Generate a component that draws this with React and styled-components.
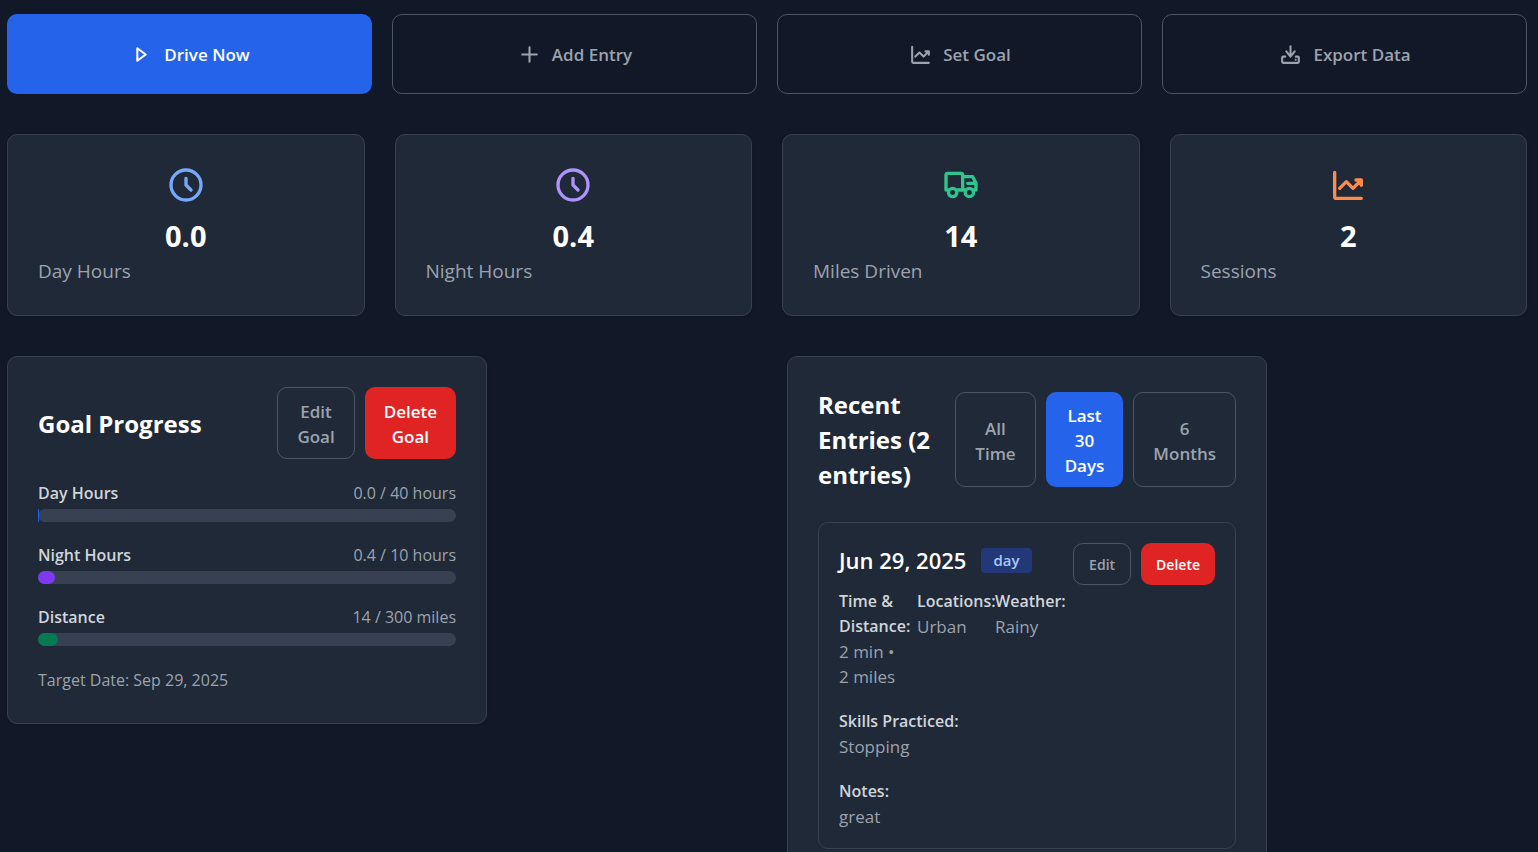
import React from "react";
import styled, { createGlobalStyle, css } from "styled-components";

const GlobalStyle = createGlobalStyle`
  *, *::before, *::after { box-sizing: border-box; }
  body {
    margin: 0;
    background: #111827;
    color: #9ca3af;
    font-family: "Segoe UI", "Open Sans", "Noto Sans", sans-serif;
    font-size: 16px;
    line-height: 25px;
  }
  h2, h3, p, dl, dt, dd, ul { margin: 0; padding: 0; }
  ul { list-style: none; }
`;

const Page = styled.main`
  display: flex;
  flex-direction: column;
  gap: 40px;
  padding: 14px 11px 40px 7px;
`;

const Actions = styled.nav`
  display: grid;
  grid-template-columns: repeat(4, 1fr);
  gap: 20px;
`;

const Stats = styled.section`
  display: grid;
  grid-template-columns: repeat(4, 1fr);
  gap: 30px;
`;

const Panels = styled.div`
  display: grid;
  grid-template-columns: repeat(2, 1fr);
  gap: 40px;
  align-items: start;
`;

const tones = {
  primary: css`
    background: #2563eb;
    color: #ffffff;
  `,
  danger: css`
    background: #e02424;
    color: #ffffff;
  `,
  outline: css`
    background: transparent;
    border: 1px solid #4b5563;
    color: #9ca3af;
  `,
};

const Button = styled.button`
  border: 0;
  border-radius: 10px;
  padding: 10px 20px;
  font: inherit;
  font-size: 17px;
  font-weight: 600;
  cursor: pointer;
  ${({ $tone }) => tones[$tone]}
`;

const ActionButton = styled(Button)`
  display: flex;
  align-items: center;
  justify-content: center;
  gap: 10px;
  height: 80px;
`;

const StackedButton = styled(Button)`
  width: min-content;
  padding: 11px 19px 9px;
`;

const SmallButton = styled(Button)`
  padding: 8px 15px;
  height: 42px;
  font-size: 14px;
`;

const Svg = styled.svg`
  display: block;
  flex: none;
  width: ${({ $size }) => $size}px;
  height: ${({ $size }) => $size}px;
`;

const Card = styled.section`
  background: #1f2937;
  border: 1px solid #374151;
  border-radius: 10px;
  padding: 30px;
  box-shadow: 0 1px 3px rgba(0, 0, 0, 0.1);
`;

const StatCard = styled(Card)`
  display: flex;
  flex-direction: column;
`;

const StatIcon = styled.div`
  align-self: center;
  margin-bottom: 10px;
  color: ${({ $color }) => $color};
`;

const StatValue = styled.p`
  color: #ffffff;
  font-size: 29px;
  font-weight: 700;
  line-height: 42px;
  text-align: center;
`;

const StatLabel = styled.p`
  font-size: 19px;
  line-height: 28px;
`;

const Panel = styled(Card)`
  width: 100%;
  max-width: 480px;
`;

const PanelHeader = styled.header`
  display: flex;
  align-items: center;
  gap: 20px;
  margin-bottom: ${({ $space }) => $space}px;
`;

const PanelTitle = styled.h2`
  flex: 1;
  color: #ffffff;
  font-size: 24px;
  font-weight: 700;
  line-height: 35px;
`;

const ButtonGroup = styled.div`
  display: flex;
  gap: 10px;
`;

const GoalList = styled.ul`
  display: grid;
  gap: 21px;
  margin-bottom: 22px;
`;

const GoalRow = styled.div`
  display: flex;
  justify-content: space-between;
  margin-bottom: 3px;
`;

const Label = styled.span`
  color: #d1d5db;
  font-weight: 600;
`;

const Track = styled.div`
  height: 13px;
  border-radius: 7px;
  background: #374151;
`;

const Fill = styled.div`
  height: 100%;
  min-width: 1px;
  border-radius: inherit;
  background: ${({ $color }) => $color};
`;

const Entry = styled.article`
  display: flex;
  align-items: flex-start;
  border: 1px solid #374151;
  border-radius: 10px;
  padding: 20px 20px 19px;
`;

const EntryBody = styled.div`
  flex: 1;
  min-width: 0;
`;

const EntryHeading = styled.div`
  display: flex;
  align-items: center;
  gap: 15px;
  margin-bottom: 11px;
`;

const EntryDate = styled.h3`
  color: #ffffff;
  font-size: 22px;
  font-weight: 600;
  line-height: 35px;
  white-space: nowrap;
`;

const Badge = styled.span`
  border-radius: 4px;
  padding: 0 12px;
  background: #233876;
  color: #a4cafe;
  font-size: 15px;
  font-weight: 600;
`;

const Details = styled.dl`
  display: grid;
  grid-template-columns: repeat(3, minmax(0, 1fr));
`;

const Detail = styled.div`
  margin-bottom: ${({ $last }) => ($last ? 0 : 20)}px;
`;

const Term = styled.dt`
  color: #d1d5db;
  font-weight: 600;
`;

const Description = styled.dd`
  font-size: 17px;
`;

const NoWrap = styled.span`
  white-space: nowrap;
`;

const paths = {
  play: "M8 18V6l8 6-8 6Z",
  plus: "M5 12h14m-7 7V5",
  chart:
    "M4 4.5V19a1 1 0 0 0 1 1h15M7 14l4-4 4 4 5-5m0 0h-3.207M20 9v3.207",
  download:
    "M12 13V4M7 14H5a1 1 0 0 0-1 1v4a1 1 0 0 0 1 1h14a1 1 0 0 0 1-1v-4a1 1 0 0 0-1-1h-2m-1-5-4 5-4-5m9 8h.01",
  clock: "M12 8v4l3 3m6-3a9 9 0 1 1-18 0 9 9 0 0 1 18 0Z",
  truck:
    "M13 7h6l2 4m-8-4v8m0-8V6a1 1 0 0 0-1-1H4a1 1 0 0 0-1 1v9h2m8 0H9m4 0h2m4 0h2v-4m0 0h-5m3.5 5.5a2.5 2.5 0 1 1-5 0 2.5 2.5 0 0 1 5 0Zm-10 0a2.5 2.5 0 1 1-5 0 2.5 2.5 0 0 1 5 0Z",
};

function Icon({ name, size }) {
  return (
    <Svg
      $size={size}
      viewBox="0 0 24 24"
      fill="none"
      stroke="currentColor"
      strokeWidth="2"
      strokeLinecap="round"
      strokeLinejoin="round"
      aria-hidden="true"
    >
      <path d={paths[name]} />
    </Svg>
  );
}

const actions = [
  { text: "Drive Now", icon: "play", tone: "primary" },
  { text: "Add Entry", icon: "plus", tone: "outline" },
  { text: "Set Goal", icon: "chart", tone: "outline" },
  { text: "Export Data", icon: "download", tone: "outline" },
];

const stats = [
  { label: "Day Hours", value: "0.0", icon: "clock", color: "#76a9fa" },
  { label: "Night Hours", value: "0.4", icon: "clock", color: "#ac94fa" },
  { label: "Miles Driven", value: "14", icon: "truck", color: "#31c48d" },
  { label: "Sessions", value: "2", icon: "chart", color: "#ff8a4c" },
];

const goals = [
  { label: "Day Hours", text: "0.0 / 40 hours", percent: 0.1, color: "#1c64f2" },
  { label: "Night Hours", text: "0.4 / 10 hours", percent: 4, color: "#7e3af2" },
  { label: "Distance", text: "14 / 300 miles", percent: 4.7, color: "#057a55" },
];

export default function App() {
  return (
    <>
      <GlobalStyle />
      <Page>
        <Actions>
          {actions.map((a) => (
            <ActionButton key={a.text} type="button" $tone={a.tone}>
              <Icon name={a.icon} size={25} />
              {a.text}
            </ActionButton>
          ))}
        </Actions>

        <Stats>
          {stats.map((s) => (
            <StatCard key={s.label} as="div">
              <StatIcon $color={s.color}>
                <Icon name={s.icon} size={40} />
              </StatIcon>
              <StatValue>{s.value}</StatValue>
              <StatLabel>{s.label}</StatLabel>
            </StatCard>
          ))}
        </Stats>

        <Panels>
          <Panel>
            <PanelHeader $space={22}>
              <PanelTitle>Goal Progress</PanelTitle>
              <ButtonGroup>
                <StackedButton type="button" $tone="outline">Edit Goal</StackedButton>
                <StackedButton type="button" $tone="danger">Delete Goal</StackedButton>
              </ButtonGroup>
            </PanelHeader>
            <GoalList>
              {goals.map((g) => (
                <li key={g.label}>
                  <GoalRow>
                    <Label>{g.label}</Label>
                    <span>{g.text}</span>
                  </GoalRow>
                  <Track>
                    <Fill $color={g.color} style={{ width: `${g.percent}%` }} />
                  </Track>
                </li>
              ))}
            </GoalList>
            <p>Target Date: Sep 29, 2025</p>
          </Panel>

          <Panel>
            <PanelHeader $space={30}>
              <PanelTitle>Recent Entries (2 entries)</PanelTitle>
              <ButtonGroup>
                <StackedButton type="button" $tone="outline">All Time</StackedButton>
                <StackedButton type="button" $tone="primary">Last 30 Days</StackedButton>
                <StackedButton type="button" $tone="outline">6 Months</StackedButton>
              </ButtonGroup>
            </PanelHeader>
            <Entry>
              <EntryBody>
                <EntryHeading>
                  <EntryDate>Jun 29, 2025</EntryDate>
                  <Badge>day</Badge>
                </EntryHeading>
                <Details>
                  <Detail>
                    <Term>Time &amp; Distance:</Term>
                    <Description>
                      2 min • <NoWrap>2 miles</NoWrap>
                    </Description>
                  </Detail>
                  <Detail>
                    <Term>Locations:</Term>
                    <Description>Urban</Description>
                  </Detail>
                  <Detail>
                    <Term>Weather:</Term>
                    <Description>Rainy</Description>
                  </Detail>
                </Details>
                <dl>
                  <Detail>
                    <Term>Skills Practiced:</Term>
                    <Description>Stopping</Description>
                  </Detail>
                  <Detail $last>
                    <Term>Notes:</Term>
                    <Description>great</Description>
                  </Detail>
                </dl>
              </EntryBody>
              <ButtonGroup>
                <SmallButton type="button" $tone="outline">Edit</SmallButton>
                <SmallButton type="button" $tone="danger">Delete</SmallButton>
              </ButtonGroup>
            </Entry>
          </Panel>
        </Panels>
      </Page>
    </>
  );
}
